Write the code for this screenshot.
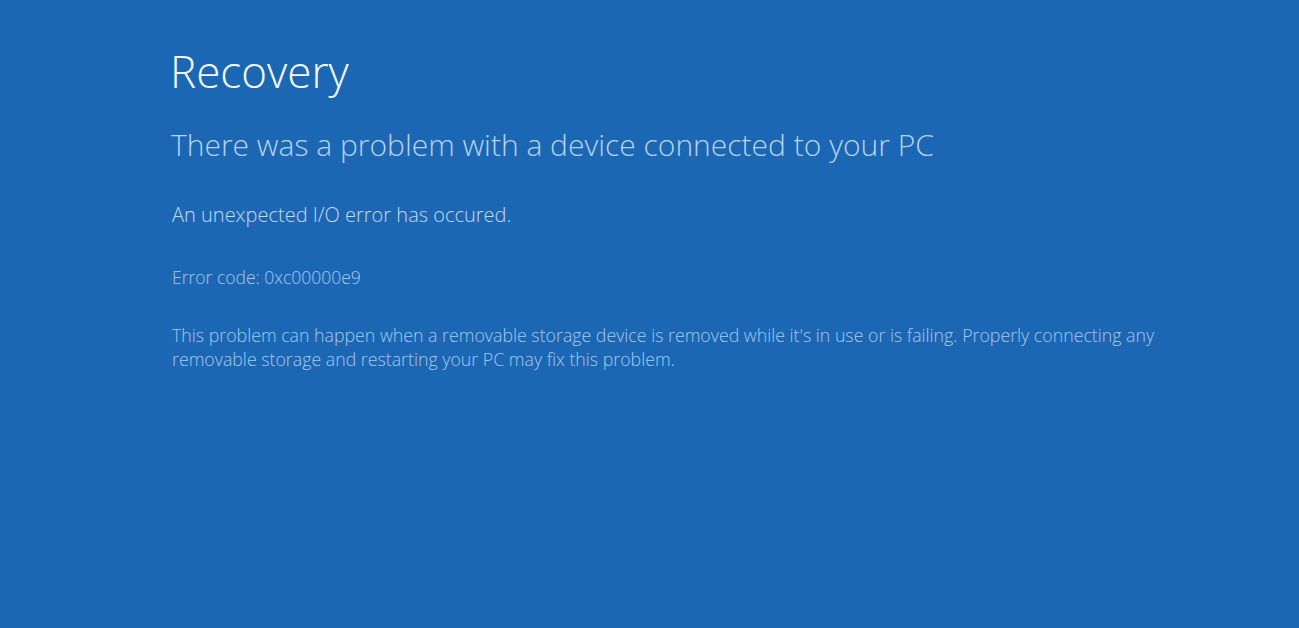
export default function App() {
  return (
    <div
      className="w-[1299px] h-[628px] bg-[#1b67b4] overflow-hidden"
      style={{ fontFamily: '"Open Sans", "Noto Sans", sans-serif' }}
    >
      <div className="pl-[170px] pt-[43px]">
        <h1 className="text-[44px] leading-[56px] font-light text-[#f4f8fc]">Recovery</h1>

        <h2 className="mt-[26px] ml-[1px] text-[30px] leading-[40px] font-light text-[#b9d3ef]">
          There was a problem with a device connected to your PC
        </h2>

        <p className="mt-[37px] ml-[2px] text-[20px] leading-[26px] font-light text-[#c6daf0]">
          An unexpected I/O error has occured.
        </p>

        <p className="mt-[37px] ml-[2px] text-[17.5px] leading-[24px] font-light text-[#a9c7e8]">
          Error code: 0xc00000e9
        </p>

        <p className="mt-[34px] ml-[2px] text-[17.75px] leading-[24px] font-light text-[#a9c7e8] whitespace-nowrap">
          This problem can happen when a removable storage device is removed while it's in use or is failing. Properly connecting any
          <br />
          removable storage and restarting your PC may fix this problem.
        </p>
      </div>
    </div>
  );
}
